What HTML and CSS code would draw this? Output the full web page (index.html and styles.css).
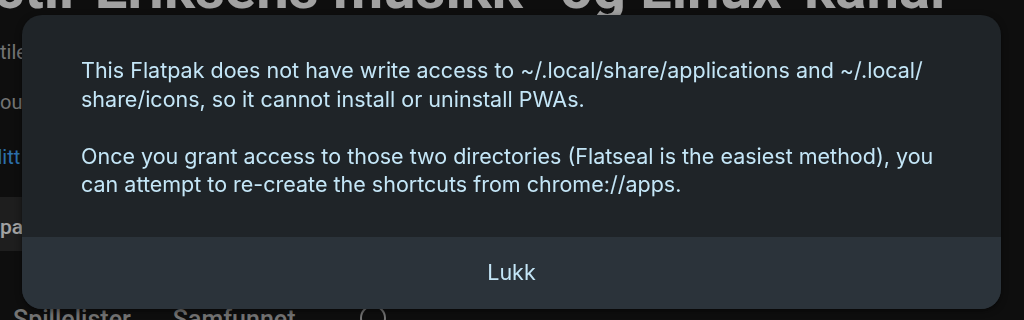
FILE: index.html
```html
<!DOCTYPE html>
<html lang="no">
<head>
<meta charset="utf-8">
<title>Flatpak</title>
<link rel="stylesheet" href="styles.css">
</head>
<body>
<div class="page">
  <h1 class="channel-title">ctir Eriksens musikk- og Linux-kanal</h1>
  <div class="meta first">tilegner</div>
  <div class="meta second">outube</div>
  <div class="link">ditt</div>
  <div class="chip"><span>pa</span></div>
  <div class="tabs"><span>Spillelister</span><span>Samfunnet</span><span class="search"></span></div>
</div>
<div class="overlay">
  <div class="dialog">
    <div class="dialog-body">
      <p>This Flatpak does not have write access to ~/.local/share/applications and ~/.local/<br>share/icons, so it cannot install or uninstall PWAs.</p>
      <p>Once you grant access to those two directories (Flatseal is the easiest method), you<br>can attempt to re-create the shortcuts from chrome://apps.</p>
    </div>
    <div class="dialog-footer">Lukk</div>
  </div>
</div>
</body>
</html>
```
FILE: styles.css
```css
html, body {
  margin: 0;
  padding: 0;
  background: #0f0f0f;
  height: 100%;
  overflow: hidden;
}
body {
  font-family: Roboto, "Noto Sans", sans-serif;
}
.page {
  display: flex;
  flex-direction: column;
}
.channel-title {
  margin: -44px 0 0 -6px;
  font-size: 58px;
  line-height: 64px;
  font-weight: 700;
  color: #f1f1f1;
  white-space: nowrap;
}
.meta {
  color: #aaaaaa;
  font-size: 20px;
  line-height: 24px;
}
.meta.first { margin-top: 20px; }
.meta.second { margin-top: 26px; }
.link {
  color: #3ea6ff;
  font-size: 20px;
  line-height: 24px;
  margin-top: 31px;
  margin-left: -9px;
}
.chip {
  margin-top: 28px;
  background: #272727;
  height: 54px;
  display: flex;
  align-items: center;
  width: 120px;
}
.chip span {
  color: #f1f1f1;
  font-size: 21px;
  font-weight: 500;
  padding-top: 6px;
}
.tabs {
  display: flex;
  align-items: flex-start;
  gap: 42px;
  margin-top: 55px;
  margin-left: 13px;
  color: #aaaaaa;
  font-size: 25px;
  font-weight: 500;
  line-height: 28px;
}
.search {
  width: 26px;
  height: 26px;
  border: 2px solid #aaa;
  border-radius: 50%;
  box-sizing: border-box;
  margin-left: 22px;
  margin-top: -1px;
}
.overlay {
  position: fixed;
  inset: 0;
  background: rgba(15, 15, 15, 0.35);
}
.dialog {
  position: absolute;
  left: 22px;
  top: 15px;
  width: 979px;
  height: 294px;
  border-radius: 20px;
  overflow: hidden;
  display: flex;
  flex-direction: column;
  background: #1f2428;
  box-shadow: 0 2px 6px rgba(0,0,0,0.5);
  font-family: Inter, "Noto Sans", sans-serif;
}
.dialog-body {
  flex: 1;
  padding: 41px 40px 0 59px;
  color: #c4e6f7;
  font-size: 21.5px;
  line-height: 28.5px;
}
.dialog-body p {
  margin: 0 0 28.5px 0;
}
.dialog-footer {
  height: 72px;
  background: #2b333a;
  color: #c4e6f7;
  font-size: 21.5px;
  display: flex;
  align-items: center;
  justify-content: center;
  padding-bottom: 2px;
  box-sizing: border-box;
}
```
